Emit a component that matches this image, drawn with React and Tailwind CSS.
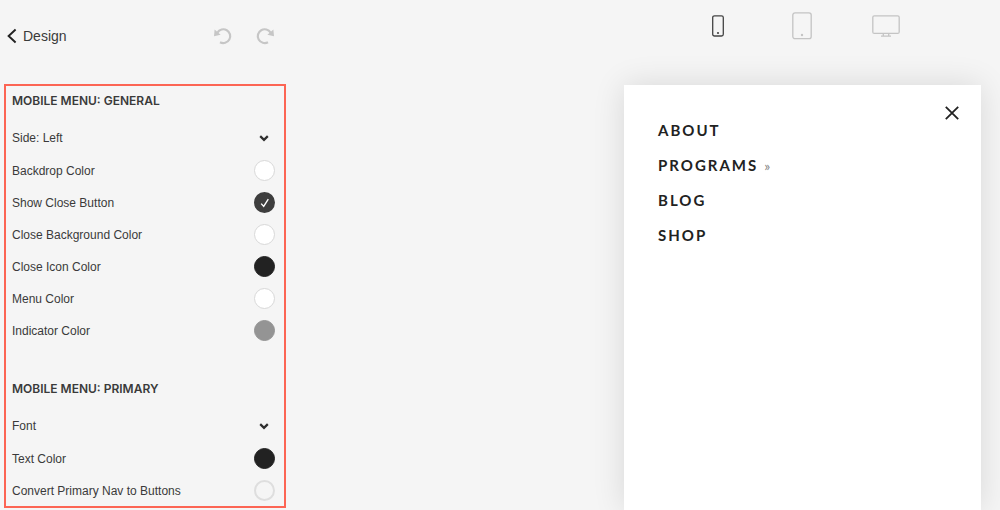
import { useState } from "react";

const GENERAL = [
    { type: "select", id: "side", options: ["Side: Left", "Side: Right"] },
    { type: "color", id: "backdrop", label: "Backdrop Color", style: "bg-white border-[#d8d8d8]" },
    { type: "toggle", id: "show-close", label: "Show Close Button", checked: true },
    { type: "color", id: "close-bg", label: "Close Background Color", style: "bg-white border-[#d8d8d8]" },
    { type: "color", id: "close-icon", label: "Close Icon Color", style: "bg-[#222222] border-[#222222]" },
    { type: "color", id: "menu", label: "Menu Color", style: "bg-white border-[#d8d8d8]" },
    { type: "color", id: "indicator", label: "Indicator Color", style: "bg-[#949494] border-[#949494]" },
];

const PRIMARY = [
    { type: "group", id: "font", label: "Font" },
    { type: "color", id: "text", label: "Text Color", style: "bg-[#222222] border-[#222222]" },
    { type: "toggle", id: "nav-buttons", label: "Convert Primary Nav to Buttons", checked: false },
];

const NAV = [
    { label: "ABOUT" },
    { label: "PROGRAMS", children: true },
    { label: "BLOG" },
    { label: "SHOP" },
];

function Chevron({ className = "" }) {
    return (
        <svg className={className} width="10" height="8" viewBox="0 0 10 8" fill="none" stroke="#2e2e2e" strokeWidth="2.2">
            <path d="M1.2 2.1 5 5.9l3.8-3.8" />
        </svg>
    );
}

function Row({ item }) {
    const [checked, setChecked] = useState(item.checked ?? false);

    if (item.type === "select") {
        return (
            <div className="relative flex h-8 items-center">
                <select id={item.id} aria-label="Side" className="h-full w-full appearance-none bg-transparent outline-none">
                    {item.options.map((option) => (
                        <option key={option}>{option}</option>
                    ))}
                </select>
                <Chevron className="pointer-events-none absolute right-1.5" />
            </div>
        );
    }

    if (item.type === "group") {
        return (
            <button id={item.id} className="flex h-8 w-full items-center justify-between pr-1.5" aria-expanded="false">
                {item.label}
                <Chevron />
            </button>
        );
    }

    return (
        <div className="flex h-8 items-center justify-between">
            <label htmlFor={item.id} className="pt-0.5">
                {item.label}
            </label>
            {item.type === "color" ? (
                <button id={item.id} className={`size-[21px] rounded-full border ${item.style}`} />
            ) : (
                <span className="relative flex size-[21px]">
                    <input
                        id={item.id}
                        type="checkbox"
                        checked={checked}
                        onChange={() => setChecked(!checked)}
                        className="size-full appearance-none rounded-full border-2 border-[#dedede] checked:border-[#3e3e3e] checked:bg-[#3e3e3e]"
                    />
                    {checked && (
                        <svg className="pointer-events-none absolute inset-0" viewBox="0 0 21 21" fill="none" stroke="#fff" strokeWidth="1.4">
                            <path d="m7.2 11.6 2.5 2.8 4.6-7.2" />
                        </svg>
                    )}
                </span>
            )}
        </div>
    );
}

function Section({ title, items }) {
    return (
        <section>
            <h2 className="mb-1.5 font-['Inter',sans-serif] leading-[30px] font-semibold">{title}</h2>
            {items.map((item) => (
                <Row key={item.id} item={item} />
            ))}
        </section>
    );
}

function UndoIcon({ className = "" }) {
    return (
        <svg className={className} width="18" height="18" viewBox="0 0 18 18" fill="none">
            <path d="M3.4 5.6A6.9 6.9 0 1 1 6 15.2" stroke="#c6c6c6" strokeWidth="2.2" />
            <path d="M.6 2.4 0 9.2l6.6-1.4z" fill="#c6c6c6" />
        </svg>
    );
}

function Toolbar() {
    return (
        <header className="flex h-[72px] items-center justify-between pr-3 pl-[7px]">
            <button className="flex items-center gap-1.5 text-sm">
                <svg width="10" height="16" viewBox="0 0 10 16" fill="none" stroke="#222" strokeWidth="1.9">
                    <path d="M8.6 1.5 1.6 8l7 6.5" />
                </svg>
                Design
            </button>
            <div className="flex gap-6">
                <button aria-label="Undo">
                    <UndoIcon />
                </button>
                <button aria-label="Redo">
                    <UndoIcon className="-scale-x-100" />
                </button>
            </div>
        </header>
    );
}

function DeviceBar() {
    return (
        <div className="flex h-[85px] pt-3">
            <button aria-label="Phone" className="flex h-7 flex-1 items-center justify-center text-[#444]">
                <svg width="12" height="22" viewBox="0 0 12 22" fill="none" stroke="currentColor" strokeWidth="1.3">
                    <rect x=".7" y=".8" width="10.6" height="20.2" rx="1.8" />
                    <circle cx="6" cy="18" r="1.1" fill="currentColor" stroke="none" />
                </svg>
            </button>
            <button aria-label="Tablet" className="flex h-7 w-[84px] items-center justify-center text-[#c4c4c4]">
                <svg width="20" height="28" viewBox="0 0 20 28" fill="none" stroke="currentColor" strokeWidth="1.3">
                    <rect x=".8" y=".8" width="18.4" height="25.8" rx="2.2" />
                    <circle cx="10" cy="23" r="1.2" fill="currentColor" stroke="none" />
                </svg>
            </button>
            <button aria-label="Desktop" className="flex h-7 flex-1 items-center justify-center text-[#c4c4c4]">
                <svg width="28" height="22" viewBox="0 0 28 22" fill="none" stroke="currentColor" strokeWidth="1.3">
                    <rect x=".8" y=".8" width="26.4" height="17.6" rx="1.5" />
                    <path d="M11.3 18.5v2.3m5.4-2.3v2.3M9 21.2h10" />
                </svg>
            </button>
        </div>
    );
}

export default function App() {
    return (
        <div className="flex min-h-screen justify-between overflow-hidden bg-[#f5f5f5] font-['Liberation_Sans',Arial,sans-serif] text-[#3a3a3a]">
            <aside className="w-[286px]">
                <Toolbar />
                <div className="mt-3 ml-1 border-2 border-[#fc6554] pr-[9px] pl-1.5 text-xs">
                    <Section title="MOBILE MENU: GENERAL" items={GENERAL} />
                    <div className="h-7" />
                    <Section title="MOBILE MENU: PRIMARY" items={PRIMARY} />
                </div>
            </aside>

            <main className="mr-[19px] flex w-[357px] flex-col">
                <div className="mx-auto w-[254px] pr-0.5">
                    <DeviceBar />
                </div>
                <div className="flex flex-1 items-start justify-between bg-white px-[34px] shadow-[0_0_30px_rgba(0,0,0,0.12)]">
                    <nav className="pt-7 font-['Lato',sans-serif] text-[15px] leading-[35px] font-bold tracking-[2px] text-[#222]">
                        {NAV.map((link) => (
                            <a key={link.label} href="#" className="flex items-center gap-1.5">
                                {link.label}
                                {link.children && <span className="text-sm leading-none font-normal text-[#858585]">»</span>}
                            </a>
                        ))}
                    </nav>
                    <button aria-label="Close menu" className="-mr-3 pt-[21px]">
                        <svg width="14" height="14" viewBox="0 0 14 14" fill="none" stroke="#222" strokeWidth="1.8">
                            <path d="m.8.8 12.4 12.4M13.2.8.8 13.2" />
                        </svg>
                    </button>
                </div>
            </main>
        </div>
    );
}
